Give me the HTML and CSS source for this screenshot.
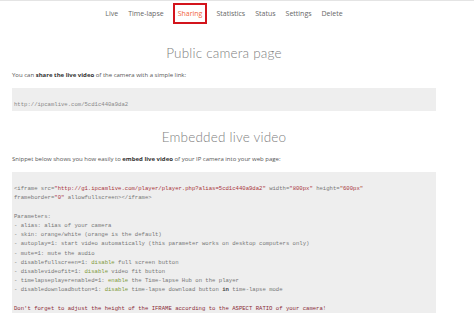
FILE: index.html
```html
<!DOCTYPE html>
<html lang="en">
<head>
  <meta charset="UTF-8">
  <title>Sharing</title>
  <link rel="stylesheet" href="styles.css">
</head>
<body>
  <div class="nav">
    <a class="nav-item">Live</a>
    <a class="nav-item">Time-lapse</a>
    <a class="nav-item active">Sharing</a>
    <a class="nav-item">Statistics</a>
    <a class="nav-item">Status</a>
    <a class="nav-item">Settings</a>
    <a class="nav-item">Delete</a>
  </div>

  <div class="container">
    <h1 class="title">Public camera page</h1>
    <p class="text">You can <b>share the live video</b> of the camera with a simple link:</p>
    <pre class="code code-link">http://ipcamlive.com/5cd1c440a9da2</pre>

    <h2 class="title title-second">Embedded live video</h2>
    <p class="text">Snippet below shows you how easily to <b>embed live video</b> of your IP camera into your web page:</p>
    <pre class="code code-snippet">&lt;iframe src=<span class="str">"http://g1.ipcamlive.com/player/player.php?alias=5cd1c440a9da2"</span> width=<span class="str">"800px"</span> height=<span class="str">"600px"</span>
frameborder=<span class="str">"0"</span> allowfullscreen&gt;&lt;/iframe&gt;

Parameters:
- alias: alias of your camera
- skin: orange/white (orange is the default)
- autoplay=1: start video automatically (this parameter works on desktop computers only)
- mute=1: mute the audio
- disablefullscreen=1: <span class="kw">disable</span> full screen button
- disablevideofit=1: <span class="kw">disable</span> video fit button
- timelapseplayerenabled=1: <span class="kw">enable</span> the Time-lapse Hub on the player
- disabledownloadbutton=1: <span class="kw">disable</span> time-lapse download button <b>in</b> time-lapse mode

<span class="warn">Don't forget to adjust the height of the IFRAME according to the ASPECT RATIO of your camera!</span></pre>
  </div>
</body>
</html>
```

FILE: styles.css
```css
body {
  margin: 0;
  font-family: "Open Sans", Arial, sans-serif;
  background-color: white;
  color: #555;
}

.nav {
  border-top: 1px solid #e4e4e4;
  height: 24px;
  padding: 0 38px 0 12px;
  display: flex;
  align-items: center;
  justify-content: center;
  gap: 8px;
}

.nav-item {
  font-size: 7px;
  color: #666;
  padding: 0 1px;
}

.nav-item.active {
  color: #f2643c;
  border: 2px solid #d3141c;
  padding: 4px 3px;
}

.container {
  padding: 0 38px 0 12px;
}

.title {
  font-family: Lato, "Open Sans", sans-serif;
  font-weight: 300;
  font-size: 13.5px;
  color: #808080;
  text-align: center;
  margin: 18px 0 0;
  line-height: 20px;
  letter-spacing: 0.2px;
}

.title-second {
  margin-top: 16px;
}

.text {
  font-size: 6px;
  color: #555;
  margin: 7px 0 0;
  line-height: 10px;
}

.text b {
  color: #333;
}

.code {
  background-color: #eeeeee;
  font-family: "Liberation Mono", monospace;
  font-size: 5.6px;
  color: #777;
  margin: 0;
  line-height: 9.2px;
  white-space: pre;
  overflow: hidden;
}

.code-link {
  margin-top: 8px;
  padding: 12px 2px 2px;
  color: #888;
}

.code-snippet {
  margin-top: 8px;
  padding: 12px 2px 10px;
}

.code b {
  color: #444;
}

.str {
  color: #a8333a;
}

.kw {
  color: #7f9a3c;
}

.warn {
  color: #8a2a36;
}
```
